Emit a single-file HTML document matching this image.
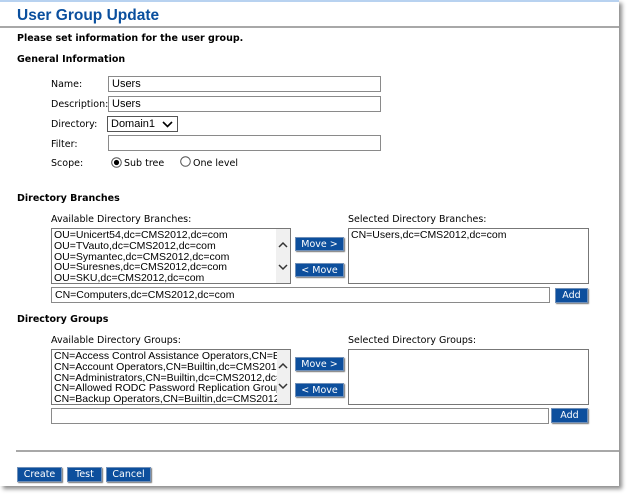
<!DOCTYPE html>
<html><head><meta charset="utf-8"><style>
*{box-sizing:border-box;margin:0;padding:0}
body{width:631px;height:497px;background:#fff;position:relative;overflow:hidden;font-family:"DejaVu Sans","Liberation Sans",sans-serif;font-size:10px;color:#000}
.a{position:absolute;white-space:nowrap}
#panel{position:absolute;left:0;top:0;width:619px;height:486px;background:#fff;border-top:2px solid #b8d2f0;box-shadow:3px 3px 4px rgba(0,0,0,.45)}
.t{color:#0a4f9e;font-family:"Liberation Sans",sans-serif;font-weight:bold;font-size:15.5px}
.b{font-weight:bold;font-size:9.5px}
.lab{font-size:9.5px}
.in{position:absolute;border:1px solid #8a8a8a;background:#fff;font-size:11px;padding:1px 3px;line-height:12px;font-family:"Liberation Sans",sans-serif;white-space:nowrap}
.btn{position:absolute;background:#0d4f9d;color:#fff;font-size:9.5px;text-align:center;border:1px solid #6f8fb8;box-shadow:1px 1px 1px #777;line-height:13px}
.list{position:absolute;border:1px solid #777;background:#fff;font-size:10.5px;line-height:10.8px;padding:1px 2px;overflow:hidden;font-family:"Liberation Sans",sans-serif;white-space:nowrap}
.line{position:absolute;height:2px;background:#a8a8a8}
</style></head><body>
<div id="panel"></div>
<div class="a t" style="left:17px;top:7px">User Group Update</div>
<div class="line" style="left:0;top:26px;width:619px"></div>
<div class="a b" style="left:17px;top:33px">Please set information for the user group.</div>
<div class="a b" style="left:17px;top:54px">General Information</div>
<div class="a lab" style="left:51px;top:79px">Name:</div>
<div class="in" style="left:108px;top:76px;width:273px;height:16px">Users</div>
<div class="a lab" style="left:51px;top:99px">Description:</div>
<div class="in" style="left:108px;top:96px;width:273px;height:16px">Users</div>
<div class="a lab" style="left:51px;top:119px">Directory:</div>
<div class="in" style="left:107px;top:116px;width:71px;height:16px;border-color:#555">Domain1<svg style="position:absolute;right:4px;top:4px" width="11" height="7"><path d="M1 1L5.5 5.5L10 1" stroke="#000" stroke-width="1.6" fill="none"/></svg></div>
<div class="a lab" style="left:51px;top:139px">Filter:</div>
<div class="in" style="left:108px;top:135px;width:273px;height:16px"></div>
<div class="a lab" style="left:51px;top:158px">Scope:</div>
<svg class="a" style="left:111px;top:157px" width="11" height="11"><circle cx="5.5" cy="5.5" r="4.8" fill="#fff" stroke="#555"/><circle cx="5.5" cy="5.5" r="2.6" fill="#000"/></svg>
<div class="a lab" style="left:124px;top:158px">Sub tree</div>
<svg class="a" style="left:180px;top:156px" width="11" height="11"><circle cx="5.5" cy="5.5" r="4.8" fill="#fff" stroke="#555"/></svg>
<div class="a lab" style="left:193px;top:158px">One level</div>

<div class="a b" style="left:17px;top:193px">Directory Branches</div>
<div class="a lab" style="left:51px;top:214px">Available Directory Branches:</div>
<div class="a lab" style="left:348px;top:214px">Selected Directory Branches:</div>
<div class="list" style="left:51px;top:228px;width:240px;height:56px">OU=Unicert54,dc=CMS2012,dc=com<br>OU=TVauto,dc=CMS2012,dc=com<br>OU=Symantec,dc=CMS2012,dc=com<br>OU=Suresnes,dc=CMS2012,dc=com<br>OU=SKU,dc=CMS2012,dc=com
<div style="position:absolute;right:0;top:0;width:14px;height:54px;background:#f0f0f0"></div>
<svg style="position:absolute;right:2px;top:12px" width="10" height="30"><path d="M1 6L5 2L9 6M1 24L5 28L9 24" stroke="#333" stroke-width="1.5" fill="none"/></svg></div>
<div class="btn" style="left:295px;top:237px;width:49px;height:14px">Move &gt;</div>
<div class="btn" style="left:295px;top:263px;width:49px;height:14px">&lt; Move</div>
<div class="list" style="left:348px;top:228px;width:241px;height:56px">CN=Users,dc=CMS2012,dc=com</div>
<div class="in" style="left:51px;top:287px;width:499px;height:16px;font-size:10.5px">CN=Computers,dc=CMS2012,dc=com</div>
<div class="btn" style="left:555px;top:288px;width:33px;height:15px">Add</div>

<div class="a b" style="left:17px;top:314px">Directory Groups</div>
<div class="a lab" style="left:51px;top:335px">Available Directory Groups:</div>
<div class="a lab" style="left:348px;top:335px">Selected Directory Groups:</div>
<div class="list" style="left:51px;top:349px;width:240px;height:56px">CN=Access Control Assistance Operators,CN=Built<br>CN=Account Operators,CN=Builtin,dc=CMS2012,d<br>CN=Administrators,CN=Builtin,dc=CMS2012,dc=t<br>CN=Allowed RODC Password Replication Group,CN<br>CN=Backup Operators,CN=Builtin,dc=CMS2012,dc
<div style="position:absolute;right:0;top:0;width:13px;height:54px;background:#f0f0f0"></div>
<svg style="position:absolute;right:2px;top:12px" width="10" height="30"><path d="M1 6L5 2L9 6M1 22L5 26L9 22" stroke="#333" stroke-width="1.5" fill="none"/></svg></div>
<div class="btn" style="left:295px;top:357px;width:49px;height:14px">Move &gt;</div>
<div class="btn" style="left:295px;top:383px;width:49px;height:14px">&lt; Move</div>
<div class="list" style="left:348px;top:349px;width:241px;height:56px"></div>
<div class="in" style="left:51px;top:408px;width:498px;height:16px"></div>
<div class="btn" style="left:551px;top:408px;width:37px;height:15px">Add</div>

<div class="line" style="left:16px;top:450px;width:603px"></div>
<div class="btn" style="left:17px;top:467px;width:45px;height:15px">Create</div>
<div class="btn" style="left:67px;top:467px;width:35px;height:15px">Test</div>
<div class="btn" style="left:106px;top:467px;width:45px;height:15px">Cancel</div>
</body></html>
